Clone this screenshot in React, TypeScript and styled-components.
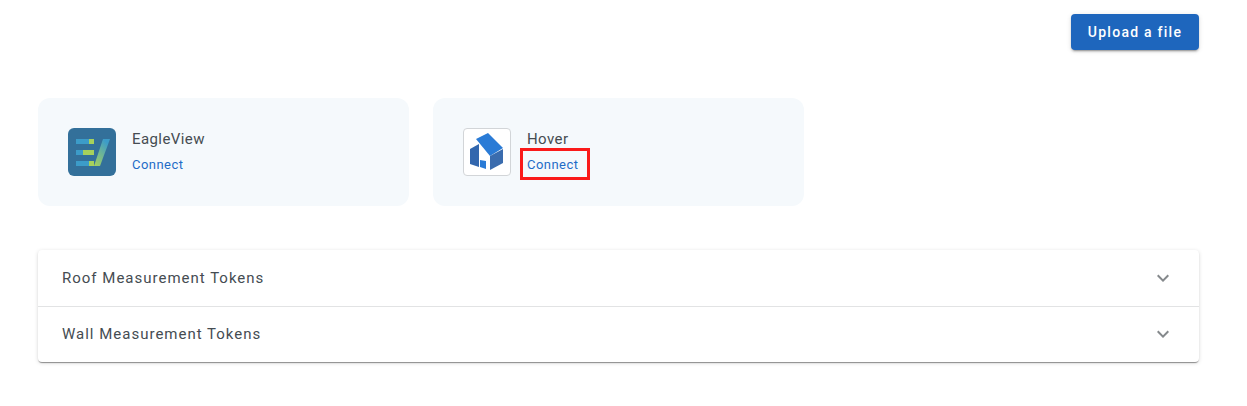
import React from "react";
import styled, { createGlobalStyle } from "styled-components";

const GlobalStyle = createGlobalStyle`
  html, body {
    margin: 0;
    padding: 0;
    background: #ffffff;
    font-family: Roboto, "Liberation Sans", sans-serif;
  }
`;

const Page = styled.div`
  width: 1247px;
  height: 406px;
  box-sizing: border-box;
  padding: 14px 48px 0 38px;
  overflow: hidden;
`;

const Toolbar = styled.div`
  display: flex;
  justify-content: flex-end;
  margin-bottom: 48px;
`;

const UploadButton = styled.button`
  width: 128px;
  height: 36px;
  border: none;
  border-radius: 4px;
  background: #1e66bd;
  color: #ffffff;
  font-family: inherit;
  font-size: 14px;
  font-weight: 500;
  letter-spacing: 1.25px;
  box-shadow: 0 3px 1px -2px rgba(0, 0, 0, 0.2), 0 2px 2px 0 rgba(0, 0, 0, 0.14), 0 1px 5px 0 rgba(0, 0, 0, 0.12);
`;

const Cards = styled.div`
  display: flex;
  gap: 24px;
  margin-bottom: 44px;
`;

const Card = styled.div`
  width: 371px;
  height: 108px;
  box-sizing: border-box;
  padding: 30px;
  display: flex;
  gap: 16px;
  border-radius: 12px;
  background: #f5f9fc;
`;

const LogoBox = styled.div<{ $framed?: boolean }>`
  width: 48px;
  height: 48px;
  flex: none;
  box-sizing: border-box;
  border-radius: ${(p) => (p.$framed ? "4px" : "6px")};
  overflow: hidden;
  background: ${(p) => (p.$framed ? "#ffffff" : "#33709a")};
  border: ${(p) => (p.$framed ? "1px solid #d2d5d8" : "none")};

  svg {
    display: block;
    width: 100%;
    height: 100%;
  }
`;

const CardText = styled.div`
  display: flex;
  flex-direction: column;
`;

const CardName = styled.div`
  margin-top: 1px;
  font-size: 15px;
  line-height: 20px;
  letter-spacing: 0.42px;
  color: #454c52;
`;

const ConnectLink = styled.a<{ $marked?: boolean }>`
  position: relative;
  margin-top: 7px;
  font-size: 13px;
  line-height: 18px;
  letter-spacing: 0.45px;
  color: #1f6cc7;

  ${(p) =>
    p.$marked &&
    `&::after {
      content: "";
      position: absolute;
      left: -7px;
      right: -12px;
      top: -8px;
      bottom: -6px;
      border: 3px solid #fa1a1a;
    }`}
`;

const Accordion = styled.div`
  width: 1161px;
  border-radius: 4px;
  background: #ffffff;
  box-shadow: 0 2px 1px -1px rgba(0, 0, 0, 0.28), 0 1px 1px 0 rgba(0, 0, 0, 0.16), 0 1px 4px 0 rgba(0, 0, 0, 0.14);
`;

const AccordionRow = styled.div`
  height: 56px;
  box-sizing: border-box;
  padding: 0 24px;
  display: flex;
  align-items: center;
  justify-content: space-between;
  font-size: 15px;
  letter-spacing: 1px;
  color: #454c52;

  & + & {
    border-top: 1px solid #e2e3e4;
    padding-bottom: 1px;
  }
`;

const Chevron = styled.svg`
  width: 24px;
  height: 24px;
  fill: #85898c;
`;

const ExpandIcon = () => (
  <Chevron viewBox="0 0 24 24">
    <path d="M16.59 8.59 12 13.17 7.41 8.59 6 10l6 6 6-6z" />
  </Chevron>
);

const EagleViewLogo = () => (
  <svg viewBox="0 0 48 48">
    <defs>
      <linearGradient id="slash" x1="0" y1="1" x2="0.6" y2="0">
        <stop offset="0" stopColor="#a6d15c" />
        <stop offset="1" stopColor="#3c9cc9" />
      </linearGradient>
    </defs>
    <rect x="8" y="11" width="13" height="5" fill="#3c9cc9" />
    <rect x="21" y="11" width="5" height="5" fill="#a6d15c" />
    <rect x="8" y="22" width="7" height="5" fill="#3c9cc9" />
    <rect x="15" y="22" width="11" height="5" fill="#a6d15c" />
    <rect x="8" y="33" width="13" height="5" fill="#3c9cc9" />
    <rect x="21" y="33" width="5" height="5" fill="#a6d15c" />
    <polygon points="35,11 42,11 32,38 26,38" fill="url(#slash)" />
  </svg>
);

const HoverLogo = () => (
  <svg viewBox="1 1 46 46">
    <polygon points="13,11 25,5 40,20 27,28" fill="#2a7bd6" />
    <polygon points="7,21 16,16 16,39 7,36" fill="#3267ae" />
    <polygon points="27,28 40,21 40,35 27,42" fill="#3a6cae" />
    <polygon points="17,32 23,33 23,41 17,39" fill="#2a7bd6" />
  </svg>
);

export default function App() {
  return (
    <Page>
      <GlobalStyle />
      <Toolbar>
        <UploadButton>Upload a file</UploadButton>
      </Toolbar>
      <Cards>
        <Card>
          <LogoBox>
            <EagleViewLogo />
          </LogoBox>
          <CardText>
            <CardName>EagleView</CardName>
            <ConnectLink>Connect</ConnectLink>
          </CardText>
        </Card>
        <Card>
          <LogoBox $framed>
            <HoverLogo />
          </LogoBox>
          <CardText>
            <CardName>Hover</CardName>
            <ConnectLink $marked>Connect</ConnectLink>
          </CardText>
        </Card>
      </Cards>
      <Accordion>
        <AccordionRow>
          Roof Measurement Tokens
          <ExpandIcon />
        </AccordionRow>
        <AccordionRow>
          Wall Measurement Tokens
          <ExpandIcon />
        </AccordionRow>
      </Accordion>
    </Page>
  );
}
